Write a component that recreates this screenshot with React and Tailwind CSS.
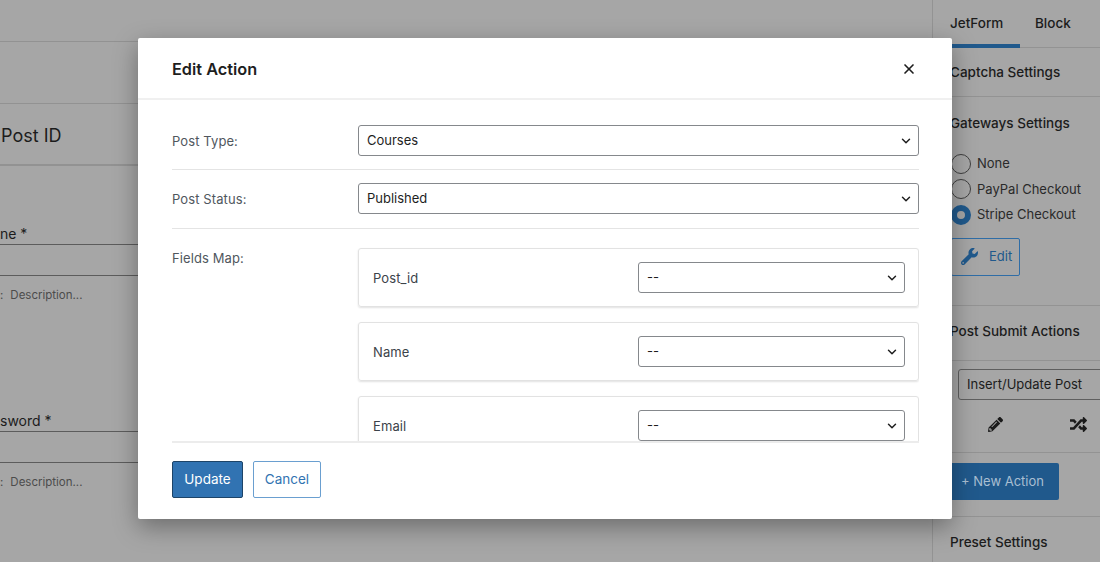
import React from 'react';
import { X, ChevronDown } from 'lucide-react';
import { FaWrench, FaPencilAlt, FaRandom } from 'react-icons/fa';

const FIELDS = ['Post_id', 'Name', 'Email'];

const Select = ({ value, className }) => (
  <div className={`flex items-center justify-between h-[31px] pl-2 pr-[5px] bg-white border border-[#85888c] rounded-[3px] text-[13px] text-[#1e1e1e] ${className}`}>
    <span className="pt-px">{value}</span>
    <ChevronDown className="h-[14px] w-[14px] text-[#1e1e1e]" strokeWidth={2.5} />
  </div>
);

const Radio = ({ label, checked }) => (
  <div className="flex items-center gap-[6px] h-[25.5px] text-[13px] text-[#2a2a2a]">
    {checked ? (
      <span className="h-[20px] w-[20px] rounded-full border-[6px] border-[#20598c] bg-[#a6a6a6]"></span>
    ) : (
      <span className="h-[20px] w-[20px] rounded-full border border-[#3f3f3f]"></span>
    )}
    <span>{label}</span>
  </div>
);

const App = () => {
  return (
    <div className="relative flex h-[562px] w-[1100px] overflow-hidden bg-[#a6a6a6] font-['Inter','Liberation_Sans',sans-serif] text-[#1c1c1c]">
      {/* Page behind the overlay */}
      <div className="flex-1 min-w-0">
        <div className="h-[42px] border-b border-[#929292]"></div>
        <div className="h-[62px] border-b border-[#929292]"></div>
        <div className="flex items-center h-[62px] pt-[3px] pl-[1px] border-b-2 border-[#929292] text-[18px]">Post ID</div>
        <div className="pt-[58px] text-[14px] leading-[20px] h-[78px]">ne *</div>
        <div className="h-[32px] border-y border-[#5c5c5c]"></div>
        <div className="flex pt-[10px] h-[136px] text-[11.5px] leading-[18px] text-[#4c4c4c]">
          <span>:</span>
          <span className="ml-[7px]">Description...</span>
        </div>
        <div className="h-[20px] -mt-[1px] text-[14px] leading-[20px]">sword *</div>
        <div className="h-[32px] border-y border-[#5c5c5c]"></div>
        <div className="flex pt-[10px] text-[11.5px] leading-[18px] text-[#4c4c4c]">
          <span>:</span>
          <span className="ml-[7px]">Description...</span>
        </div>
      </div>

      {/* Sidebar behind the overlay */}
      <div className="w-[168px] shrink-0 border-l border-[#939393] text-[13.5px]">
        <div className="flex h-[48px] border-b border-[#939393]">
          <div className="w-[87px] h-[48px] pl-[17px] pt-[13px] border-b-[4px] border-[#20598c] font-medium leading-[20px]">JetForm</div>
          <div className="pl-[15px] pt-[13px] font-medium leading-[20px]">Block</div>
        </div>
        <div className="h-[49px] pl-[17px] pt-[14px] border-b border-[#939393] font-medium leading-[20px] whitespace-nowrap">Captcha Settings</div>
        <div className="h-[209px] pl-[18px] border-b border-[#939393]">
          <div className="pt-[16px] -ml-px font-medium leading-[20px] whitespace-nowrap">Gateways Settings</div>
          <div className="mt-[18px]">
            <Radio label="None" />
            <Radio label="PayPal Checkout" />
            <Radio label="Stripe Checkout" checked />
          </div>
          <div className="flex items-center gap-[11px] mt-[10px] h-[38px] w-[69px] pl-[9px] border border-[#2f6da6] rounded-[2px] text-[13px] text-[#20598c]">
            <FaWrench className="h-[17px] w-[17px]" />
            <span>Edit</span>
          </div>
        </div>
        <div className="h-[55px] pl-[17px] pt-[15px] border-b border-[#939393] font-medium leading-[20px] whitespace-nowrap">Post Submit Actions</div>
        <div className="h-[92px] pl-[25px] pt-[8px] border-b border-[#939393]">
          <div className="flex items-center h-[31px] w-[160px] pl-[8px] border border-[#5f5f5f] rounded-[3px] text-[13px] whitespace-nowrap">Insert/Update Post</div>
          <div className="flex items-center gap-[67px] mt-[16px] pl-[30px]">
            <FaPencilAlt className="h-[15px] w-[15px] text-[#1a1a1a]" />
            <FaRandom className="h-[17px] w-[17px] text-[#1a1a1a]" />
          </div>
        </div>
        <div className="h-[64px] pl-[17px] pt-[10px] border-b border-[#939393]">
          <div className="flex items-center h-[37px] w-[109px] pl-[11px] bg-[#20598c] rounded-[2px] text-[13px] text-[#a9bfd2] whitespace-nowrap">+ New Action</div>
        </div>
        <div className="pl-[17px] pt-[15px] font-medium leading-[20px]">Preset Settings</div>
      </div>

      {/* Modal */}
      <div className="absolute left-[138px] top-[38px] flex h-[481px] w-[814px] flex-col rounded-[2px] bg-white shadow-[0_8px_24px_rgba(0,0,0,0.35)]">
        <div className="flex h-[62px] shrink-0 items-center justify-between border-b-2 border-[#f0f0f0] pt-[2px] pl-[34px] pr-[35px]">
          <h1 className="text-[16.3px] font-semibold text-[#1e1e1e]">Edit Action</h1>
          <X className="h-[16px] w-[16px] text-[#1e1e1e]" strokeWidth={2.5} />
        </div>

        <div className="ml-[34px] mr-[33px] flex-1 min-h-0 overflow-hidden">
          <div className="flex h-[70px] items-start border-b border-[#e4e4e4] pt-[25px]">
            <span className="w-[186px] pt-[6px] text-[13px] leading-[20px] tracking-[0.1px] text-[#50575e]">Post Type:</span>
            <Select value="Courses" className="flex-1" />
          </div>
          <div className="flex h-[59px] items-start border-b border-[#e4e4e4] pt-[13px]">
            <span className="w-[186px] pt-[6px] text-[13px] leading-[20px] tracking-[0.1px] text-[#50575e]">Post Status:</span>
            <Select value="Published" className="flex-1" />
          </div>
          <div className="flex pt-[19px]">
            <span className="w-[186px] text-[13px] leading-[20px] tracking-[0.1px] text-[#50575e]">Fields Map:</span>
            <div className="flex flex-1 flex-col gap-[15px]">
              {FIELDS.map((field) => (
                <div key={field} className="flex h-[59px] shrink-0 items-center justify-between rounded-[3px] border border-[#e2e2e2] pl-[14px] pr-[13px] shadow-[0_1px_2px_rgba(0,0,0,0.12)]">
                  <span className="pt-[3px] text-[13px] tracking-[0.1px] text-[#3c434a]">{field}</span>
                  <Select value="--" className="w-[267px]" />
                </div>
              ))}
            </div>
          </div>
        </div>

        <div className="ml-[34px] mr-[33px] flex h-[78px] shrink-0 gap-[10px] border-t-2 border-[#ececec] pt-[18px]">
          <div className="flex h-[37px] w-[71px] items-center justify-center rounded-[2px] border border-[#1d4468] bg-[#3173b2] text-[13.5px] text-white">Update</div>
          <div className="flex h-[37px] w-[68px] items-center justify-center rounded-[2px] border border-[#6a9fd0] text-[13.5px] text-[#3173b2]">Cancel</div>
        </div>
      </div>
    </div>
  );
};

export default App;
